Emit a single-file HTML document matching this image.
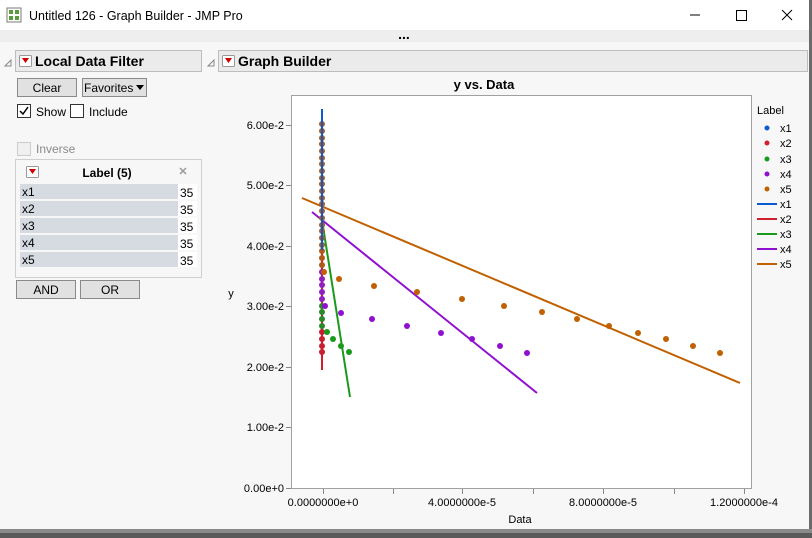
<!DOCTYPE html>
<html><head><meta charset="utf-8"><style>
body{margin:0;width:812px;height:533px;overflow:hidden;background:#5a5a5a;font-family:"Liberation Sans",sans-serif}
</style></head><body>
<svg width="812" height="533" xmlns="http://www.w3.org/2000/svg" font-family="Liberation Sans, sans-serif">
<rect x="0" y="0" width="810" height="529" fill="#f7f7f7"/>
<rect x="0" y="529" width="812" height="4" fill="#8a8a8a"/>
<rect x="809" y="0" width="3" height="529" fill="#6b6b6b"/>
<rect x="0" y="0" width="809" height="30" fill="#fff"/>
<rect x="0" y="30" width="809" height="12" fill="#eeeeee"/>
<text x="404" y="39" font-size="14" text-anchor="middle" font-weight="bold">...</text>
<rect x="7" y="8" width="14" height="14" fill="none" stroke="#7a7a7a"/>
<rect x="9" y="10" width="4" height="4" fill="#5a9b3a"/><rect x="15" y="10" width="4" height="4" fill="#5a9b3a"/>
<rect x="9" y="16" width="4" height="4" fill="#5a9b3a"/><rect x="15" y="16" width="4" height="4" fill="#5a9b3a"/>
<text x="29" y="20" font-size="12.5">Untitled 126 - Graph Builder - JMP Pro</text>
<line x1="690" y1="15" x2="700" y2="15" stroke="#000"/>
<rect x="736.5" y="10.5" width="10" height="10" fill="none" stroke="#000"/>
<path d="M782 10 L792 20 M792 10 L782 20" stroke="#000"/>
<path d="M5 66 L11 60 L11 66Z" fill="none" stroke="#888"/>
<rect x="15.5" y="50.5" width="186" height="21" fill="#ebebeb" stroke="#bdbdbd"/>
<rect x="19.5" y="55.5" width="12" height="11" fill="#fff" stroke="#999" rx="1"/>
<path d="M22 58 L29 58 L25.5 63Z" fill="#c00"/>
<text x="35" y="66" font-size="14" font-weight="bold">Local Data Filter</text>
<rect x="17.5" y="78.5" width="59" height="18" fill="#e1e1e1" stroke="#8a8a8a"/>
<text x="47" y="92" font-size="12" text-anchor="middle">Clear</text>
<rect x="82.5" y="78.5" width="64" height="18" fill="#e1e1e1" stroke="#8a8a8a"/>
<text x="84" y="92" font-size="12">Favorites</text>
<path d="M136 85 L144 85 L140 90Z" fill="#000"/>
<rect x="17.5" y="104.5" width="13" height="13" fill="#fff" stroke="#333"/>
<path d="M20 111 L23 114 L28 107" stroke="#000" fill="none" stroke-width="1.5"/>
<text x="36" y="116" font-size="12">Show</text>
<rect x="70.5" y="104.5" width="13" height="13" fill="#fff" stroke="#333"/>
<text x="89" y="116" font-size="12">Include</text>
<rect x="17.5" y="142.5" width="13" height="13" fill="#f0f0f0" stroke="#ccc"/>
<text x="36" y="153" font-size="12" fill="#8a8a8a">Inverse</text>
<rect x="15.5" y="159.5" width="186" height="118" fill="#f7f7f7" stroke="#cfcfcf"/>
<rect x="26.5" y="166.5" width="12" height="11" fill="#fff" stroke="#999" rx="1"/>
<path d="M29 169 L36 169 L32.5 174Z" fill="#c00"/>
<text x="107" y="177" font-size="12" font-weight="bold" text-anchor="middle">Label (5)</text>
<path d="M180 168 L186 174 M186 168 L180 174" stroke="#999" stroke-width="1.5"/>
<g font-size="12">
<rect x="20" y="184" width="158" height="15" fill="#d5dbe1"/><rect x="178" y="184" width="19" height="15" fill="#fff"/><text x="22" y="196">x1</text><text x="180" y="197">35</text>
<rect x="20" y="201" width="158" height="15" fill="#d5dbe1"/><rect x="178" y="201" width="19" height="15" fill="#fff"/><text x="22" y="213">x2</text><text x="180" y="214">35</text>
<rect x="20" y="218" width="158" height="15" fill="#d5dbe1"/><rect x="178" y="218" width="19" height="15" fill="#fff"/><text x="22" y="230">x3</text><text x="180" y="231">35</text>
<rect x="20" y="235" width="158" height="15" fill="#d5dbe1"/><rect x="178" y="235" width="19" height="15" fill="#fff"/><text x="22" y="247">x4</text><text x="180" y="248">35</text>
<rect x="20" y="252" width="158" height="15" fill="#d5dbe1"/><rect x="178" y="252" width="19" height="15" fill="#fff"/><text x="22" y="264">x5</text><text x="180" y="265">35</text>
</g>
<rect x="16.5" y="280.5" width="59" height="18" fill="#e1e1e1" stroke="#8a8a8a"/>
<text x="46" y="294" font-size="12" text-anchor="middle">AND</text>
<rect x="80.5" y="280.5" width="59" height="18" fill="#e1e1e1" stroke="#8a8a8a"/>
<text x="110" y="294" font-size="12" text-anchor="middle">OR</text>
<path d="M208 66 L214 60 L214 66Z" fill="none" stroke="#888"/>
<rect x="218.5" y="50.5" width="589" height="21" fill="#ebebeb" stroke="#bdbdbd"/>
<rect x="222.5" y="55.5" width="12" height="11" fill="#fff" stroke="#999" rx="1"/>
<path d="M225 58 L232 58 L228.5 63Z" fill="#c00"/>
<text x="238" y="66" font-size="14" font-weight="bold">Graph Builder</text>
<text x="484" y="89" font-size="13" font-weight="bold" text-anchor="middle">y vs. Data</text>
<rect x="291.5" y="95.5" width="460" height="393" fill="#fff" stroke="#a0a0a0"/>
<g stroke="#888">
<line x1="286" y1="488.5" x2="291" y2="488.5"/><line x1="286" y1="427.5" x2="291" y2="427.5"/><line x1="286" y1="367.5" x2="291" y2="367.5"/><line x1="286" y1="306.5" x2="291" y2="306.5"/><line x1="286" y1="246.5" x2="291" y2="246.5"/><line x1="286" y1="185.5" x2="291" y2="185.5"/><line x1="286" y1="125.5" x2="291" y2="125.5"/>
<line x1="323.5" y1="489" x2="323.5" y2="494"/><line x1="393.5" y1="489" x2="393.5" y2="494"/><line x1="462.5" y1="489" x2="462.5" y2="494"/><line x1="533.5" y1="489" x2="533.5" y2="494"/><line x1="603.5" y1="489" x2="603.5" y2="494"/><line x1="674.5" y1="489" x2="674.5" y2="494"/><line x1="744.5" y1="489" x2="744.5" y2="494"/>
</g>
<g font-size="11" text-anchor="end">
<text x="284" y="492">0.00e+0</text><text x="284" y="431">1.00e-2</text><text x="284" y="371">2.00e-2</text><text x="284" y="310">3.00e-2</text><text x="284" y="250">4.00e-2</text><text x="284" y="189">5.00e-2</text><text x="284" y="129">6.00e-2</text>
</g>
<g font-size="11" text-anchor="middle">
<text x="323" y="506">0.0000000e+0</text><text x="462" y="506">4.0000000e-5</text><text x="603" y="506">8.0000000e-5</text><text x="744" y="506">1.2000000e-4</text>
<text x="520" y="523">Data</text>
</g>
<text x="231" y="297" font-size="11" text-anchor="middle">y</text>
<line x1="302" y1="198" x2="740" y2="383" stroke="#c06000" stroke-width="2"/>
<line x1="312" y1="212" x2="537" y2="393" stroke="#9010d0" stroke-width="2"/>
<line x1="322" y1="220" x2="350" y2="397" stroke="#1a9a1a" stroke-width="2"/>
<line x1="322" y1="220" x2="322" y2="370" stroke="#d02030" stroke-width="2"/>
<g fill="#b05a1a">
<circle cx="322" cy="124" r="3"/><circle cx="322" cy="131" r="3"/><circle cx="322" cy="138" r="3"/><circle cx="322" cy="144" r="3"/><circle cx="322" cy="151" r="3"/><circle cx="322" cy="158" r="3"/><circle cx="322" cy="164" r="3"/><circle cx="322" cy="171" r="3"/><circle cx="322" cy="178" r="3"/><circle cx="322" cy="184" r="3"/><circle cx="322" cy="191" r="3"/><circle cx="322" cy="198" r="3"/><circle cx="322" cy="204" r="3"/><circle cx="322" cy="211" r="3"/><circle cx="322" cy="218" r="3"/><circle cx="322" cy="225" r="3"/><circle cx="322" cy="231" r="3"/><circle cx="322" cy="238" r="3"/><circle cx="322" cy="245" r="3"/><circle cx="322" cy="251" r="3"/><circle cx="322" cy="258" r="3"/><circle cx="322" cy="265" r="3"/></g>
<g fill="#9020c0"><circle cx="322" cy="272" r="3"/><circle cx="322" cy="279" r="3"/><circle cx="322" cy="285" r="3"/><circle cx="322" cy="292" r="3"/><circle cx="322" cy="299" r="3"/></g>
<g fill="#2a8a2a"><circle cx="322" cy="306" r="3"/><circle cx="322" cy="312" r="3"/><circle cx="322" cy="319" r="3"/><circle cx="322" cy="326" r="3"/></g>
<g fill="#c82030"><circle cx="322" cy="332" r="3"/><circle cx="322" cy="339" r="3"/><circle cx="322" cy="346" r="3"/><circle cx="322" cy="352" r="3"/></g>
<line x1="322" y1="109" x2="322" y2="250" stroke="#0a5ad0" stroke-width="2"/>
<g fill="#c06000"><circle cx="324" cy="272" r="3"/><circle cx="339" cy="279" r="3"/><circle cx="374" cy="286" r="3"/><circle cx="417" cy="292" r="3"/><circle cx="462" cy="299" r="3"/><circle cx="504" cy="306" r="3"/><circle cx="542" cy="312" r="3"/><circle cx="577" cy="319" r="3"/><circle cx="609" cy="326" r="3"/><circle cx="638" cy="333" r="3"/><circle cx="666" cy="339" r="3"/><circle cx="693" cy="346" r="3"/><circle cx="720" cy="353" r="3"/></g>
<g fill="#9010d0"><circle cx="325" cy="306" r="3"/><circle cx="341" cy="313" r="3"/><circle cx="372" cy="319" r="3"/><circle cx="407" cy="326" r="3"/><circle cx="441" cy="333" r="3"/><circle cx="472" cy="339" r="3"/><circle cx="500" cy="346" r="3"/><circle cx="527" cy="353" r="3"/></g>
<g fill="#1a9a1a"><circle cx="327" cy="332" r="3"/><circle cx="333" cy="339" r="3"/><circle cx="341" cy="346" r="3"/><circle cx="349" cy="352" r="3"/></g>
<text x="757" y="114" font-size="11">Label</text>
<g font-size="11">
<circle cx="767" cy="128" r="2.5" fill="#0a5ad0"/><text x="780" y="132">x1</text>
<circle cx="767" cy="143" r="2.5" fill="#d02030"/><text x="780" y="147">x2</text>
<circle cx="767" cy="159" r="2.5" fill="#1a9a1a"/><text x="780" y="163">x3</text>
<circle cx="767" cy="174" r="2.5" fill="#9010d0"/><text x="780" y="178">x4</text>
<circle cx="767" cy="189" r="2.5" fill="#c06000"/><text x="780" y="193">x5</text>
<line x1="757" y1="204" x2="777" y2="204" stroke="#0a5ad0" stroke-width="2"/><text x="780" y="208">x1</text>
<line x1="757" y1="219" x2="777" y2="219" stroke="#d02030" stroke-width="2"/><text x="780" y="223">x2</text>
<line x1="757" y1="234" x2="777" y2="234" stroke="#1a9a1a" stroke-width="2"/><text x="780" y="238">x3</text>
<line x1="757" y1="249" x2="777" y2="249" stroke="#9010d0" stroke-width="2"/><text x="780" y="253">x4</text>
<line x1="757" y1="264" x2="777" y2="264" stroke="#c06000" stroke-width="2"/><text x="780" y="268">x5</text>
</g>
</svg>
</body></html>
